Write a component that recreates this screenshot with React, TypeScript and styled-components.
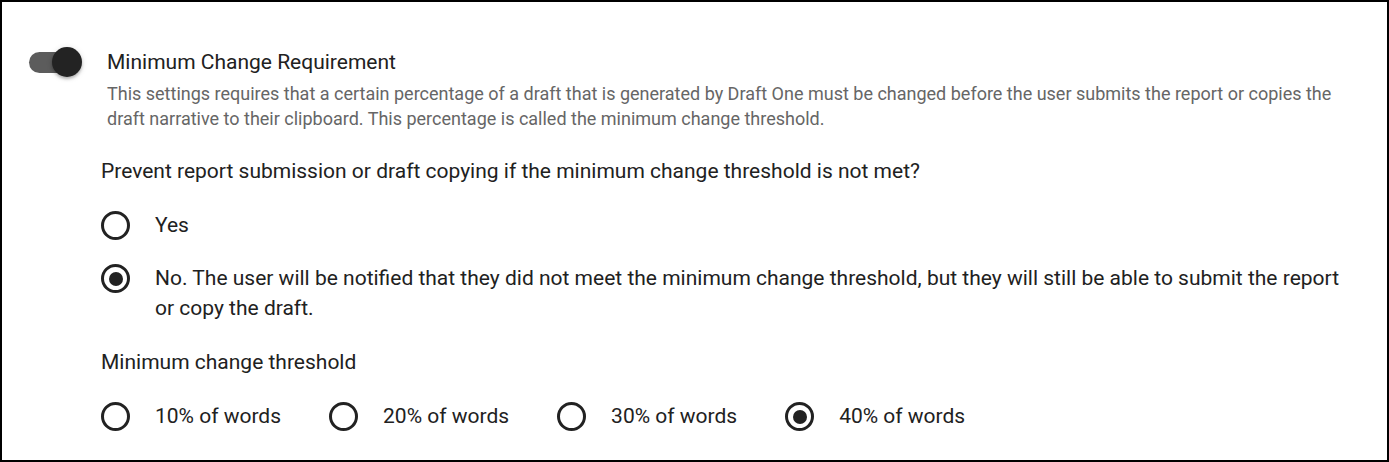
import React, { useState } from 'react';
import styled, { createGlobalStyle } from 'styled-components';

const GlobalStyle = createGlobalStyle`
  html, body {
    margin: 0;
    padding: 0;
    background: #fff;
  }
  body {
    font-family: Roboto, "Liberation Sans", Arial, sans-serif;
    color: #212121;
  }
`;

const Card = styled.div`
  box-sizing: border-box;
  width: 1389px;
  height: 462px;
  border: 2px solid #000;
  padding: 45px 32px 0 27px;
  background: #fff;
`;

const HeaderRow = styled.div`
  display: flex;
  align-items: flex-start;
  gap: 24px;
`;

const SwitchTrack = styled.button<{ $on: boolean }>`
  position: relative;
  flex: none;
  width: 54px;
  height: 30px;
  padding: 0;
  border: none;
  background: transparent;
  cursor: pointer;

  &::before {
    content: '';
    position: absolute;
    left: 0;
    top: 5px;
    width: 50px;
    height: 21px;
    border-radius: 11px;
    background: ${p => (p.$on ? '#5c5c5c' : '#b0b0b0')};
  }
`;

const SwitchThumb = styled.span<{ $on: boolean }>`
  position: absolute;
  top: 0;
  left: ${p => (p.$on ? '23px' : '0')};
  width: 30px;
  height: 30px;
  border-radius: 50%;
  background: #232323;
  box-shadow: 0 2px 3px rgba(0, 0, 0, 0.25), 0 1px 6px rgba(0, 0, 0, 0.12);
`;

const HeaderText = styled.div`
  display: flex;
  flex-direction: column;
`;

const Title = styled.div`
  font-size: 21px;
  line-height: 30px;
  color: #212121;
`;

const Description = styled.div`
  margin-top: 4px;
  font-size: 18px;
  line-height: 25px;
  color: #666;
`;

const Section = styled.div`
  margin-left: 72px;
  margin-top: 25px;
  display: flex;
  flex-direction: column;
  gap: 24px;
`;

const Label = styled.div`
  font-size: 21px;
  line-height: 30px;
  color: #212121;
`;

const OptionRow = styled.div<{ $inline?: boolean }>`
  display: flex;
  flex-direction: ${p => (p.$inline ? 'row' : 'column')};
  gap: ${p => (p.$inline ? '48px' : '23px')};
`;

const Option = styled.label`
  display: flex;
  align-items: flex-start;
  gap: 25px;
  cursor: pointer;
`;

const RadioCircle = styled.span<{ $checked: boolean }>`
  flex: none;
  box-sizing: border-box;
  width: 29px;
  height: 29px;
  margin: 1px 0 0 0;
  border: 3px solid #222;
  border-radius: 50%;
  display: flex;
  align-items: center;
  justify-content: center;

  &::after {
    content: '';
    width: 14px;
    height: 14px;
    border-radius: 50%;
    background: #222;
    display: ${p => (p.$checked ? 'block' : 'none')};
  }
`;

const OptionText = styled.span`
  font-size: 21px;
  line-height: 30px;
  color: #212121;
`;

const blockOptions = [
  { value: 'yes', label: 'Yes' },
  {
    value: 'no',
    label:
      'No. The user will be notified that they did not meet the minimum change threshold, but they will still be able to submit the report or copy the draft.',
  },
];

const thresholds = [10, 20, 30, 40];

export default function App() {
  const [enabled, setEnabled] = useState(true);
  const [block, setBlock] = useState('no');
  const [threshold, setThreshold] = useState(40);

  return (
    <>
      <GlobalStyle />
      <Card>
        <HeaderRow>
          <SwitchTrack $on={enabled} onClick={() => setEnabled(!enabled)} aria-label="Minimum Change Requirement">
            <SwitchThumb $on={enabled} />
          </SwitchTrack>
          <HeaderText>
            <Title>Minimum Change Requirement</Title>
            <Description>
              This settings requires that a certain percentage of a draft that is generated by Draft One must be
              changed before the user submits the report or copies the draft narrative to their clipboard. This
              percentage is called the minimum change threshold.
            </Description>
          </HeaderText>
        </HeaderRow>

        <Section>
          <Label>Prevent report submission or draft copying if the minimum change threshold is not met?</Label>
          <OptionRow>
            {blockOptions.map(opt => (
              <Option key={opt.value} onClick={() => setBlock(opt.value)}>
                <RadioCircle $checked={block === opt.value} />
                <OptionText>{opt.label}</OptionText>
              </Option>
            ))}
          </OptionRow>
          <Label>Minimum change threshold</Label>
          <OptionRow $inline>
            {thresholds.map(t => (
              <Option key={t} onClick={() => setThreshold(t)}>
                <RadioCircle $checked={threshold === t} />
                <OptionText>{t}% of words</OptionText>
              </Option>
            ))}
          </OptionRow>
        </Section>
      </Card>
    </>
  );
}
